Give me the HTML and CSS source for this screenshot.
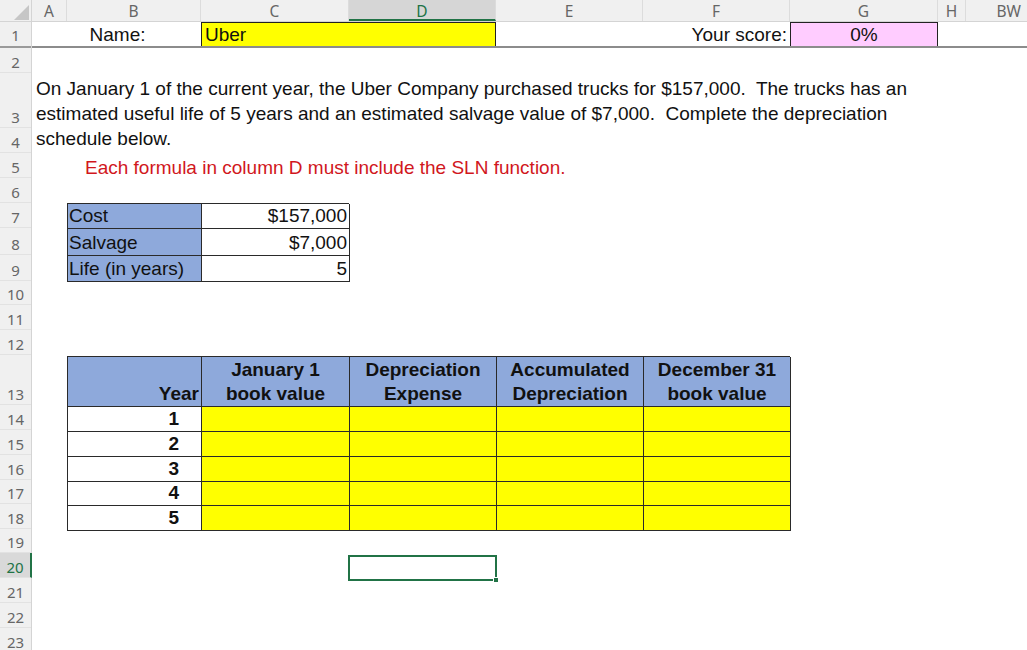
FILE: index.html
```html
<!DOCTYPE html>
<html>
<head>
<meta charset="utf-8">
<link rel="stylesheet" href="styles.css">
</head>
<body>
<div class="sheet">
  <div class="colhead">
    <div class="corner"><svg width="32" height="22" viewBox="0 0 32 22"><polygon points="29,5 29,20 14,20" fill="#c6c6c6"/></svg></div>
    <div class="ch w-a">A</div>
    <div class="ch w-b">B</div>
    <div class="ch w-c">C</div>
    <div class="ch w-d sel">D</div>
    <div class="ch w-e">E</div>
    <div class="ch w-f">F</div>
    <div class="ch w-g">G</div>
    <div class="ch w-h">H</div>
    <div class="ch w-bw">BW</div>
  </div>
  <div class="body">
    <div class="rowhead">
      <div class="rh h26 frz">1</div>
      <div class="rh h25">2</div>
      <div class="rh h55">3</div>
      <div class="rh h25">4</div>
      <div class="rh h25">5</div>
      <div class="rh h25">6</div>
      <div class="rh h25">7</div>
      <div class="rh h27">8</div>
      <div class="rh h26">9</div>
      <div class="rh h24">10</div>
      <div class="rh h25">11</div>
      <div class="rh h25">12</div>
      <div class="rh h50">13</div>
      <div class="rh h25">14</div>
      <div class="rh h25">15</div>
      <div class="rh h25">16</div>
      <div class="rh h24">17</div>
      <div class="rh h25">18</div>
      <div class="rh h24">19</div>
      <div class="rh h25 rsel">20</div>
      <div class="rh h25">21</div>
      <div class="rh h25">22</div>
      <div class="rh h22 last">23</div>
    </div>
    <div class="cells">
      <div class="row1">
        <div class="name">Name:</div>
        <div class="company">Uber</div>
        <div class="blank-e"></div>
        <div class="score-label">Your score:</div>
        <div class="score">0%</div>
      </div>
      <div class="gap25"></div>
      <div class="intro">On January 1 of the current year, the Uber Company purchased trucks for $157,000.&nbsp; The trucks has an estimated useful life of 5 years and an estimated salvage value of $7,000.&nbsp; Complete the depreciation schedule below.</div>
      <div class="note">Each formula in column D must include the SLN function.</div>
      <div class="gap25"></div>
      <div class="inputs">
        <div class="lbl">Cost</div><div class="val">$157,000</div>
        <div class="lbl">Salvage</div><div class="val">$7,000</div>
        <div class="lbl">Life (in years)</div><div class="val">5</div>
      </div>
      <div class="gap74"></div>
      <div class="sched">
        <div class="hd year">Year</div>
        <div class="hd">January 1<br>book value</div>
        <div class="hd">Depreciation<br>Expense</div>
        <div class="hd">Accumulated<br>Depreciation</div>
        <div class="hd">December 31<br>book value</div>
        <div class="yr">1</div><div class="in"></div><div class="in"></div><div class="in"></div><div class="in"></div>
        <div class="yr">2</div><div class="in"></div><div class="in"></div><div class="in"></div><div class="in"></div>
        <div class="yr">3</div><div class="in"></div><div class="in"></div><div class="in"></div><div class="in"></div>
        <div class="yr">4</div><div class="in"></div><div class="in"></div><div class="in"></div><div class="in"></div>
        <div class="yr">5</div><div class="in"></div><div class="in"></div><div class="in"></div><div class="in"></div>
      </div>
      <div class="gap24"></div>
      <div class="row20">
        <div class="selbox"><span class="handle"></span></div>
      </div>
    </div>
  </div>
</div>
</body>
</html>
```

FILE: styles.css
```css
* { box-sizing: border-box; }
html, body { margin: 0; padding: 0; background: #fff; overflow: hidden; }
.sheet { width: 1027px; height: 650px; overflow: hidden; font-family: "Liberation Sans", Arial, sans-serif; color: #111; }

.colhead { display: flex; height: 22px; background: #f0f0f0; border-bottom: 1px solid #d4d4d4; }
.corner { width: 32px; flex: none; border-right: 1px solid #d4d4d4; }
.corner svg { display: block; }
.ch { flex: none; display: flex; align-items: center; justify-content: center; font-family: "Noto Sans", "Open Sans", sans-serif; font-size: 15.5px; color: #666; border-right: 1px solid #dcdcdc; padding-top: 1px; }
.ch.sel { background: #d6d6d6; color: #217346; border-bottom: 2px solid #217346; padding-top: 3px; }
.w-a { width: 35px; }
.w-b { width: 134px; }
.w-c { width: 148px; }
.w-d { width: 147px; }
.w-e { width: 147px; }
.w-f { width: 147px; }
.w-g { width: 148px; }
.w-h { width: 28px; }
.w-bw { flex: 1; border-right: none; justify-content: flex-end; padding-right: 6px; }

.body { display: flex; }
.rowhead { width: 32px; flex: none; background: #f0f0f0; border-right: 1px solid #d4d4d4; }
.rh { display: flex; align-items: flex-end; justify-content: center; font-family: "Noto Sans", "Open Sans", sans-serif; font-size: 15px; color: #666; border-bottom: 1px solid #e2e2e2; line-height: 15px; padding-bottom: 2px; }
.rh.frz { border-bottom: 2px solid #9a9a9a; padding-bottom: 3px; }
.rh.rsel { color: #217346; background: #d9d9d9; border-right: 2px solid #217346; margin-right: -1px; }
.rh.last { border-bottom: none; padding-bottom: 0; }
.h22 { height: 22px; } .h24 { height: 24px; } .h25 { height: 25px; } .h26 { height: 26px; } .h27 { height: 27px; } .h50 { height: 50px; } .h55 { height: 55px; }

.cells { flex: 1; font-size: 19px; }
.row1 { display: flex; height: 26px; border-bottom: 2px solid #8c8c8c; line-height: 22px; }
.name { width: 169px; text-align: center; padding-top: 2px; padding-left: 2px; }
.company { width: 295px; background: #ffff00; border-left: 1px solid #222; border-right: 1px solid #222; border-top: 1px solid #222; padding: 1px 3px 0; }
.blank-e { width: 147px; }
.score-label { width: 147px; text-align: right; padding-right: 3px; padding-top: 2px; }
.score { width: 148px; background: #ffccff; border-left: 1px solid #222; border-right: 1px solid #222; border-top: 1px solid #222; text-align: center; padding-top: 1px; }

.gap25 { height: 25px; }
.gap24 { height: 24px; }
.gap74 { height: 74px; }

.intro { height: 80px; width: 906px; padding: 3px 0 0 4px; line-height: 25px; }
.note { height: 25px; padding: 3px 0 0 53px; line-height: 24px; color: #d1171d; }

.inputs { display: grid; grid-template-columns: 134px 148px; grid-template-rows: 25px 27px 26px; margin-left: 35px; width: 282px; border-left: 1px solid #2a2a2a; border-top: 1px solid #2a2a2a; }
.inputs > div { border-right: 1px solid #2a2a2a; border-bottom: 1px solid #2a2a2a; display: flex; align-items: flex-end; line-height: 22px; padding-bottom: 1px; }
.inputs .lbl { background: #8ea9db; padding-left: 1px; }
.inputs .val { justify-content: flex-end; padding-right: 2px; }

.sched { display: grid; grid-template-columns: 134px 148px 147px 147px 147px; grid-template-rows: 50px 25px 25px 25px 24px 25px; margin-left: 35px; width: 723px; border-left: 1px solid #2a2a2a; border-top: 1px solid #2a2a2a; font-weight: bold; }
.sched > div { border-right: 1px solid #2a2a2a; border-bottom: 1px solid #2a2a2a; }
.sched .hd { background: #8ea9db; display: flex; flex-direction: column; justify-content: flex-end; text-align: center; line-height: 24px; }
.sched .hd.year { text-align: right; padding-right: 2px; }
.sched .yr { display: flex; align-items: flex-end; justify-content: flex-end; padding-right: 22px; line-height: 22px; padding-bottom: 1px; }
.sched .in { background: #ffff00; }

.row20 { height: 25px; }
.selbox { position: relative; margin-left: 316px; width: 149px; height: 26px; border: 2px solid #217346; }
.handle { position: absolute; right: -4px; bottom: -4px; width: 6px; height: 6px; background: #217346; border: 1px solid #fff; }
```
